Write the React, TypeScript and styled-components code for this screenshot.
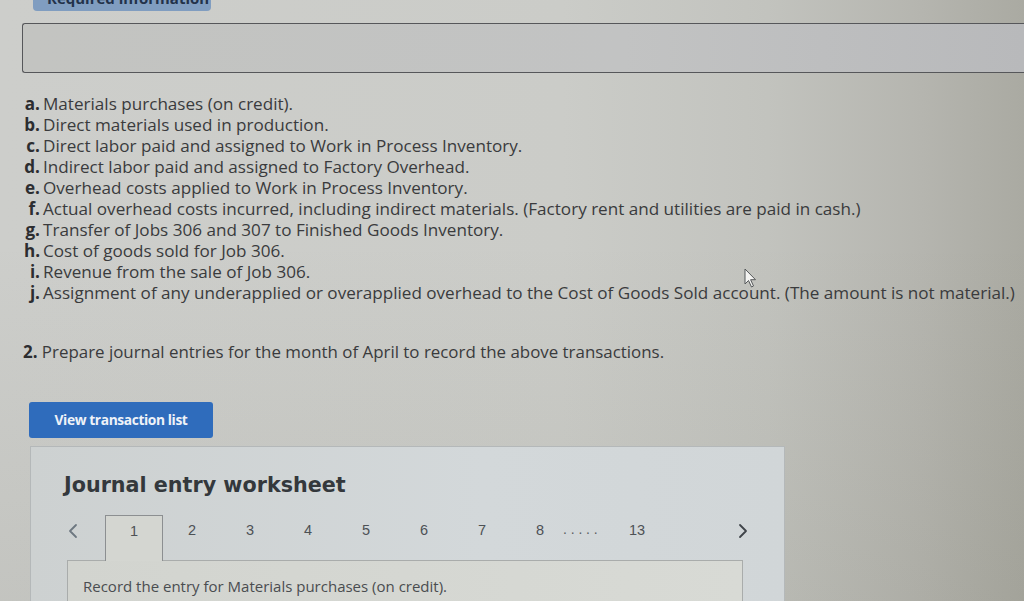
import React from 'react'
import styled, { createGlobalStyle } from 'styled-components'

const GlobalStyle = createGlobalStyle`
  html, body {
    margin: 0;
    padding: 0;
  }
  body {
    width: 1024px;
    height: 601px;
    overflow: hidden;
    font-family: "Open Sans", "Liberation Sans", sans-serif;
    color: #3a3b3d;
    background:
      linear-gradient(180deg, rgba(255, 255, 255, 0) 40%, rgba(80, 80, 60, 0.08) 100%),
      linear-gradient(90deg, #cdcecb 0%, #cbccc8 55%, #c2c3be 75%, #b5b5af 90%, #aaaaa2 100%);
  }
`

const Page = styled.div`
  position: relative;
  width: 1024px;
  height: 601px;
  overflow: hidden;
`

const TopTab = styled.div`
  margin-left: 33px;
  width: 178px;
  height: 11px;
  overflow: hidden;
  background: #809dc0;
  border-radius: 0 0 4px 4px;
  color: #23324a;
  font-weight: 700;
  font-size: 15px;
  line-height: 20px;
  padding-left: 14px;
  box-sizing: border-box;
  span {
    display: block;
    margin-top: -12px;
  }
`

const AnswerBox = styled.div`
  margin: 12px 0 0 22px;
  height: 48px;
  border: 1px solid #56575a;
  border-right: none;
  border-radius: 3px 0 0 3px;
  background: linear-gradient(90deg, #c3c4c1 0%, #c2c3c3 60%, #b8b9bb 100%);
`

const List = styled.div`
  margin: 20px 0 0 20px;
  display: flex;
  flex-direction: column;
`

const Item = styled.div`
  display: grid;
  grid-template-columns: 20px 1fr;
  column-gap: 3px;
  font-size: 17.1px;
  line-height: 21px;
  white-space: nowrap;
`

const Label = styled.span`
  text-align: right;
  font-weight: 700;
  color: #2c2d30;
`

const Step = styled.p`
  margin: 38px 0 0 23px;
  font-size: 16.9px;
  line-height: 21px;
  b {
    color: #2c2d30;
  }
`

const PrimaryButton = styled.button`
  display: block;
  margin: 40px 0 0 29px;
  width: 184px;
  height: 36px;
  border: none;
  border-radius: 3px;
  background: #2f6cbc;
  color: #eef2f8;
  font-family: "Open Sans", "Liberation Sans", sans-serif;
  font-weight: 700;
  font-size: 13.8px;
  letter-spacing: -0.4px;
  padding: 0 0 2px 0;
`

const Worksheet = styled.section`
  margin: 8px 0 0 30px;
  width: 755px;
  height: 200px;
  box-sizing: border-box;
  border: 1px solid #b4b8b9;
  background: linear-gradient(90deg, #cdd1d1 0%, #d3d8da 60%, #d1d6d8 100%);
  padding: 26px 0 0 33px;
`

const Title = styled.h2`
  margin: 0;
  font-family: "DejaVu Sans", Verdana, sans-serif;
  font-weight: 700;
  font-size: 20.7px;
  color: #34383c;
`

const TabRow = styled.div`
  margin-top: 18px;
  display: flex;
  align-items: stretch;
  height: 45px;
`

const Arrow = styled.span`
  width: 41px;
  display: flex;
  align-items: center;
  justify-content: flex-start;
  padding-left: 4px;
  padding-bottom: 14px;
  box-sizing: border-box;
  color: #6d7780;
`

const Tab = styled.span<{ $active?: boolean }>`
  width: 58px;
  box-sizing: border-box;
  display: flex;
  justify-content: center;
  padding-top: 7px;
  font-family: "Liberation Sans", Arial, sans-serif;
  font-size: 14.5px;
  color: #4d5155;
  ${p => p.$active && `
    border: 1px solid #8c8f91;
    border-bottom: none;
    background: #d4d6d1;
    margin-bottom: -1px;
    position: relative;
    z-index: 1;
  `}
`

const Dots = styled.span`
  width: 45px;
  margin-left: -6px;
  padding-top: 6px;
  box-sizing: border-box;
  font-family: "Liberation Sans", Arial, sans-serif;
  font-size: 14px;
  letter-spacing: 3.8px;
  color: #5a5e62;
`

const NextArrow = styled(Arrow)`
  margin-left: 68px;
  color: #3f4449;
`

const EntryBox = styled.div`
  margin-left: 3px;
  width: 676px;
  height: 60px;
  box-sizing: border-box;
  border: 1px solid #a9acab;
  border-bottom: none;
  background: linear-gradient(90deg, #d2d4cf 0%, #d8dad5 100%);
  padding: 15px 0 0 15px;
  font-family: "Open Sans", "Liberation Sans", sans-serif;
  font-size: 15px;
  color: #4a4d50;
`

const Cursor = styled.svg`
  position: absolute;
  left: 744px;
  top: 268px;
`

const items: [string, string][] = [
  ['a.', 'Materials purchases (on credit).'],
  ['b.', 'Direct materials used in production.'],
  ['c.', 'Direct labor paid and assigned to Work in Process Inventory.'],
  ['d.', 'Indirect labor paid and assigned to Factory Overhead.'],
  ['e.', 'Overhead costs applied to Work in Process Inventory.'],
  ['f.', 'Actual overhead costs incurred, including indirect materials. (Factory rent and utilities are paid in cash.)'],
  ['g.', 'Transfer of Jobs 306 and 307 to Finished Goods Inventory.'],
  ['h.', 'Cost of goods sold for Job 306.'],
  ['i.', 'Revenue from the sale of Job 306.'],
  ['j.', 'Assignment of any underapplied or overapplied overhead to the Cost of Goods Sold account. (The amount is not material.)'],
]

const Chevron = ({ dir }: { dir: 'left' | 'right' }) => (
  <svg width="10" height="16" viewBox="0 0 10 16">
    <path
      d={dir === 'left' ? 'M8 2 L2 8 L8 14' : 'M2 2 L8 8 L2 14'}
      fill="none"
      stroke="currentColor"
      strokeWidth="1.8"
      strokeLinecap="round"
      strokeLinejoin="round"
    />
  </svg>
)

export default function App() {
  return (
    <Page>
      <GlobalStyle />
      <TopTab><span>Required information</span></TopTab>
      <AnswerBox />
      <List>
        {items.map(([l, t]) => (
          <Item key={l}>
            <Label>{l}</Label>
            <span>{t}</span>
          </Item>
        ))}
      </List>
      <Step><b>2.</b> Prepare journal entries for the month of April to record the above transactions.</Step>
      <PrimaryButton>View transaction list</PrimaryButton>
      <Worksheet>
        <Title>Journal entry worksheet</Title>
        <TabRow>
          <Arrow><Chevron dir="left" /></Arrow>
          <Tab $active>1</Tab>
          {['2', '3', '4', '5', '6', '7', '8'].map(n => <Tab key={n}>{n}</Tab>)}
          <Dots>.....</Dots>
          <Tab>13</Tab>
          <NextArrow><Chevron dir="right" /></NextArrow>
        </TabRow>
        <EntryBox>Record the entry for Materials purchases (on credit).</EntryBox>
      </Worksheet>
      <Cursor width="14" height="20" viewBox="0 0 14 20">
        <path d="M1 1 L1 16 L4.5 12.5 L7.5 19 L9.5 18 L6.6 11.7 L11.5 11.7 Z" fill="#f4f4f2" stroke="#55585a" strokeWidth="1" strokeLinejoin="round" />
      </Cursor>
    </Page>
  )
}
